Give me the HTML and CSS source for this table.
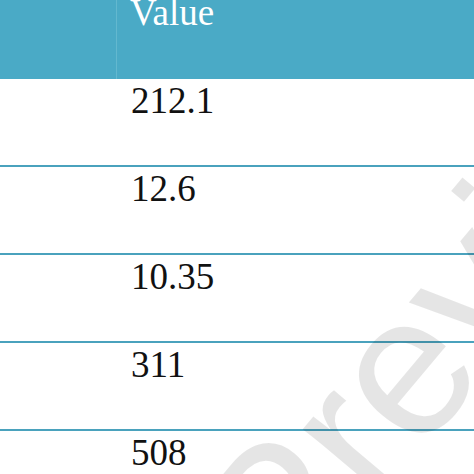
FILE: index.html
```html
<!DOCTYPE html>
<html>
<head>
<meta charset="utf-8">
<link rel="stylesheet" href="styles.css">
</head>
<body>
<div class="page">
  <div class="table">
    <div class="head">
      <div class="cell first"></div>
      <div class="cell value">Value</div>
    </div>
    <div class="row">
      <div class="cell first"></div>
      <div class="cell value">212.1</div>
    </div>
    <div class="row">
      <div class="cell first"></div>
      <div class="cell value">12.6</div>
    </div>
    <div class="row">
      <div class="cell first"></div>
      <div class="cell value">10.35</div>
    </div>
    <div class="row">
      <div class="cell first"></div>
      <div class="cell value">311</div>
    </div>
    <div class="row">
      <div class="cell first"></div>
      <div class="cell value">508</div>
    </div>
  </div>
  <div class="watermark">Preview</div>
</div>
</body>
</html>
```
FILE: styles.css
```css
html, body {
  margin: 0;
  padding: 0;
  background: #ffffff;
  overflow: hidden;
}

.page {
  position: relative;
  width: 474px;
  height: 474px;
  overflow: hidden;
}

.table {
  display: flex;
  flex-direction: column;
  font-family: "Liberation Serif", "Times New Roman", serif;
  font-size: 37px;
  color: #111111;
}

.head {
  display: grid;
  grid-template-columns: 117px 1fr;
  height: 79px;
  background: #4aaac6;
  color: #ffffff;
}

.head .first {
  border-right: 1px solid #63b8cf;
}

.head .value {
  line-height: 25px;
  padding-left: 13px;
}

.row {
  display: grid;
  grid-template-columns: 118px 1fr;
  height: 86px;
  border-bottom: 2px solid #4aa2bd;
}

.row .value {
  line-height: 37px;
  padding-top: 3px;
  padding-left: 13px;
}

.row:last-child {
  border-bottom: none;
}

.watermark {
  position: absolute;
  left: 290px;
  top: 440px;
  font-family: "Liberation Sans", Arial, sans-serif;
  font-size: 200px;
  line-height: 200px;
  color: rgba(0, 0, 0, 0.1);
  white-space: nowrap;
  transform-origin: 0 170px;
  transform: rotate(-50deg);
  pointer-events: none;
}
```
